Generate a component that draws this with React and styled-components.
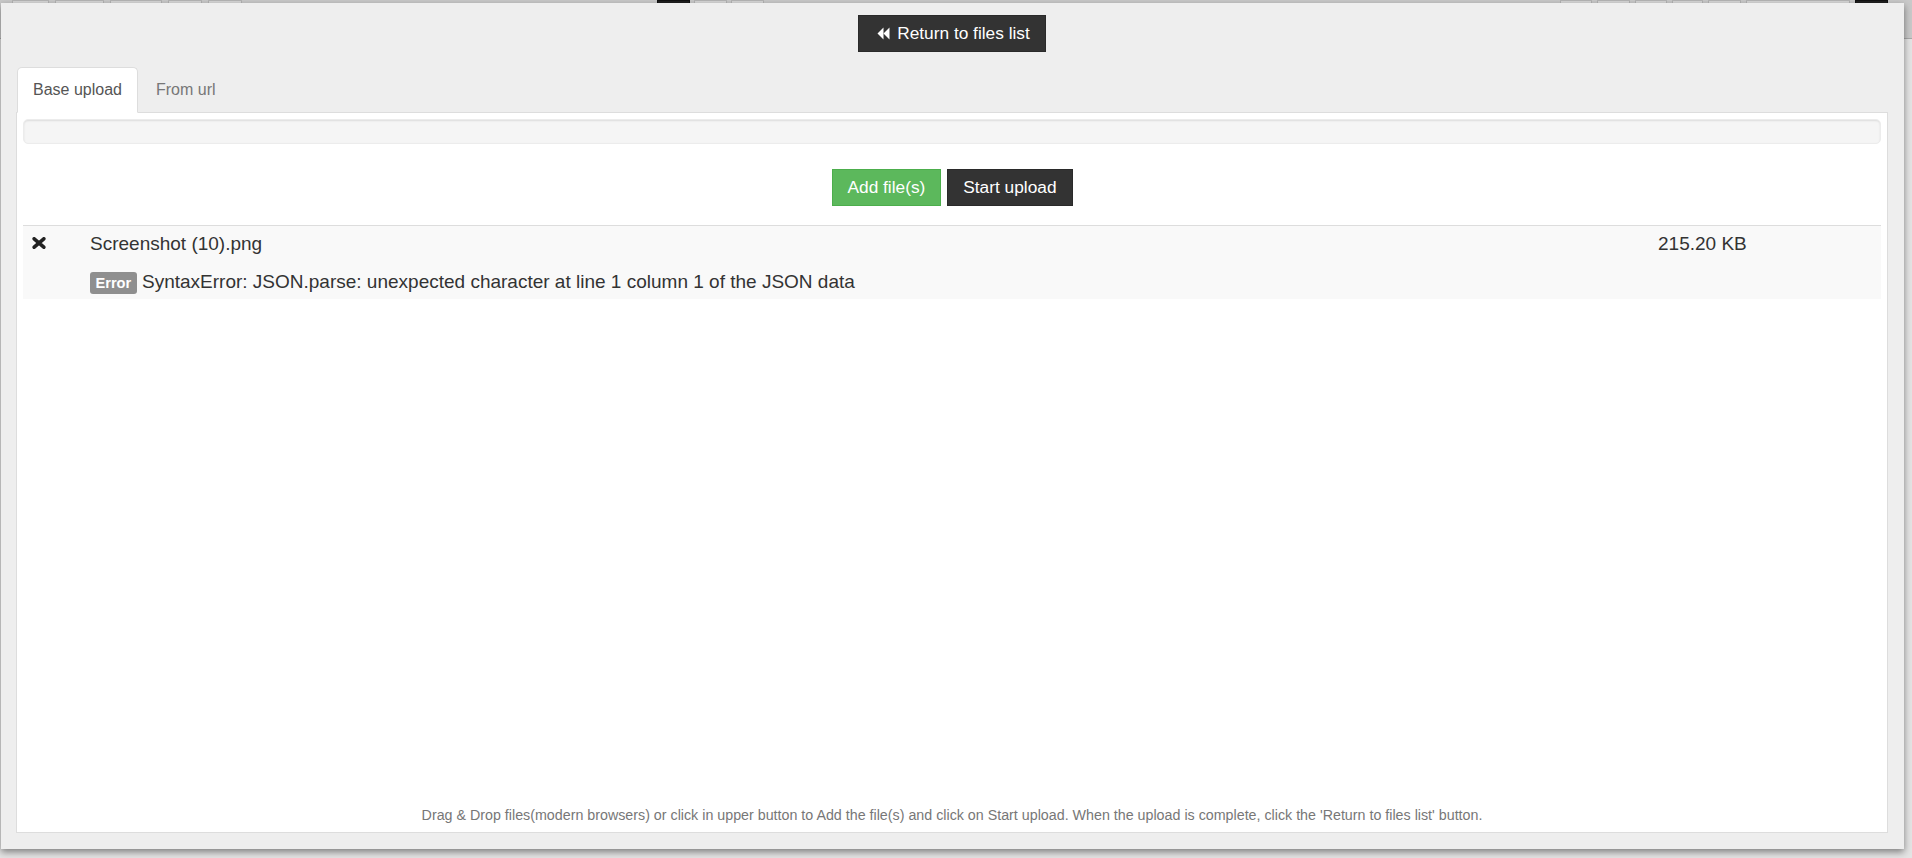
import React from "react";
import styled, { createGlobalStyle } from "styled-components";

const GlobalStyle = createGlobalStyle`
  html, body { margin: 0; padding: 0; }
  body {
    background: #e6e6e6;
    font-family: "Liberation Sans", Arial, Helvetica, sans-serif;
    color: #333;
  }
  * { box-sizing: border-box; }
`;

const Page = styled.div`
  position: relative;
  width: 1912px;
  height: 858px;
  overflow: hidden;
  background: #e4e4e4;
`;

const BackHeader = styled.div`
  height: 39px;
  display: flex;
  align-items: flex-start;
  padding: 0 24px 0 12px;
  background: #c9c9c9;
  border-bottom: 1px solid #a9a9a9;
`;

const BackGroup = styled.div`
  display: flex;
  gap: ${(p) => p.$gap}px;
  margin-left: ${(p) => (p.$auto ? "auto" : `${p.$ml}px`)};
`;

const BackTool = styled.div`
  width: ${(p) => p.$w}px;
  height: 4px;
  background: ${(p) => (p.$dark ? "#1f1f1f" : "#d8d8d8")};
  border: 1px solid ${(p) => (p.$dark ? "#111" : "#b4b4b4")};
`;

const Modal = styled.div`
  position: absolute;
  top: 3px;
  left: 1px;
  width: 1903px;
  height: 846px;
  background: #eeeeee;
  box-shadow: 0 3px 7px rgba(0, 0, 0, 0.45);
  display: flex;
  flex-direction: column;
  padding: 12px 16px 16px 15px;
`;

const TopBar = styled.div`
  display: flex;
  justify-content: center;
`;

const DarkButton = styled.button`
  height: 37px;
  display: inline-flex;
  align-items: center;
  gap: 7px;
  padding: ${(p) => p.$pad || "0 15px"};
  background: #333333;
  border: 1px solid #2a2a2a;
  border-radius: 0;
  color: #fff;
  font-family: inherit;
  font-size: 17.3px;
  cursor: pointer;
`;

const GreenButton = styled(DarkButton)`
  background: #5cb85c;
  border-color: #4cae4c;
`;

const TabList = styled.div`
  display: flex;
  margin-top: 15px;
  padding-left: 1px;
`;

const Tab = styled.div`
  height: 46px;
  margin-right: 2px;
  margin-bottom: -1px;
  padding: 0 15px;
  display: flex;
  align-items: center;
  font-size: 16px;
  color: ${(p) => (p.$active ? "#555" : "#777")};
  background: ${(p) => (p.$active ? "#fff" : "transparent")};
  border: 1px solid ${(p) => (p.$active ? "#ddd" : "transparent")};
  border-bottom-color: ${(p) => (p.$active ? "#fff" : "transparent")};
  border-radius: 5px 5px 0 0;
  position: relative;
  z-index: 1;
`;

const Panel = styled.div`
  flex: 1;
  background: #fff;
  border: 1px solid #ddd;
  padding: 6px;
  display: flex;
  flex-direction: column;
`;

const Progress = styled.div`
  height: 25px;
  background: #f5f5f5;
  border-radius: 5px;
  box-shadow: inset 0 1px 2px rgba(0, 0, 0, 0.1);
  border: 1px solid #ececec;
`;

const ActionBar = styled.div`
  display: flex;
  justify-content: center;
  gap: 6px;
  margin-top: 25px;
`;

const FileRow = styled.div`
  margin-top: 19px;
  height: 74px;
  background: #f9f9f9;
  border-top: 1px solid #ddd;
  display: grid;
  grid-template-columns: 67px 1fr 223px;
  align-content: start;
  padding-top: 3.5px;
  font-size: 19px;
  line-height: 27px;
  color: #333;
`;

const RemoveCell = styled.div`
  padding-left: 9px;
  height: 27px;
  display: flex;
  align-items: center;
`;

const NameCell = styled.div``;

const ErrorLine = styled.div`
  margin-top: 11.5px;
`;

const ErrorLabel = styled.span`
  display: inline-block;
  height: 22px;
  line-height: 22px;
  padding: 0 5.5px;
  background: #8f8f8f;
  color: #fff;
  font-weight: bold;
  font-size: 14.6px;
  border-radius: 3px;
  vertical-align: baseline;
`;

const SizeCell = styled.div``;

const Footer = styled.div`
  margin-top: auto;
  margin-bottom: 1.5px;
  text-align: center;
  font-size: 14.27px;
  line-height: 20px;
  color: #777;
`;

const BackwardIcon = () => (
  <svg width="13" height="13" viewBox="0 0 13 13" aria-hidden="true">
    <polygon points="0.5,6.5 6.5,0.5 6.5,12.5" fill="#fff" />
    <polygon points="6.5,6.5 12.5,0.5 12.5,12.5" fill="#fff" />
  </svg>
);

const RemoveIcon = () => (
  <svg width="14" height="12" viewBox="0 0 14 12" aria-hidden="true">
    <path
      d="M2.2 1.8 L11.8 10.2 M11.8 1.8 L2.2 10.2"
      stroke="#222"
      strokeWidth="3.6"
      strokeLinecap="round"
    />
  </svg>
);

const leftTools = [37, 49, 52, 34, 34];
const midTools = [
  { w: 33, dark: true },
  { w: 33 },
  { w: 33 },
];
const rightTools = [
  { w: 32 },
  { w: 33 },
  { w: 32 },
  { w: 31 },
  { w: 33 },
  { w: 104 },
  { w: 33, dark: true },
];

export default function App() {
  return (
    <>
      <GlobalStyle />
      <Page>
        <BackHeader>
          <BackGroup $gap={6} $ml={0}>
            {leftTools.map((w, i) => (
              <BackTool key={i} $w={w} />
            ))}
          </BackGroup>
          <BackGroup $gap={4} $ml={415}>
            {midTools.map((t, i) => (
              <BackTool key={i} $w={t.w} $dark={t.dark} />
            ))}
          </BackGroup>
          <BackGroup $gap={5} $auto>
            {rightTools.map((t, i) => (
              <BackTool key={i} $w={t.w} $dark={t.dark} />
            ))}
          </BackGroup>
        </BackHeader>

        <Modal>
          <TopBar>
            <DarkButton $pad="0 15px 0 18px">
              <BackwardIcon />
              Return to files list
            </DarkButton>
          </TopBar>

          <TabList>
            <Tab $active>Base upload</Tab>
            <Tab>From url</Tab>
          </TabList>

          <Panel>
            <Progress />
            <ActionBar>
              <GreenButton>Add file(s)</GreenButton>
              <DarkButton>Start upload</DarkButton>
            </ActionBar>

            <FileRow>
              <RemoveCell>
                <RemoveIcon />
              </RemoveCell>
              <NameCell>
                <div>Screenshot (10).png</div>
                <ErrorLine>
                  <ErrorLabel>Error</ErrorLabel> SyntaxError: JSON.parse:
                  unexpected character at line 1 column 1 of the JSON data
                </ErrorLine>
              </NameCell>
              <SizeCell>215.20 KB</SizeCell>
            </FileRow>

            <Footer>
              Drag &amp; Drop files(modern browsers) or click in upper button
              to Add the file(s) and click on Start upload. When the upload is
              complete, click the 'Return to files list' button.
            </Footer>
          </Panel>
        </Modal>
      </Page>
    </>
  );
}
